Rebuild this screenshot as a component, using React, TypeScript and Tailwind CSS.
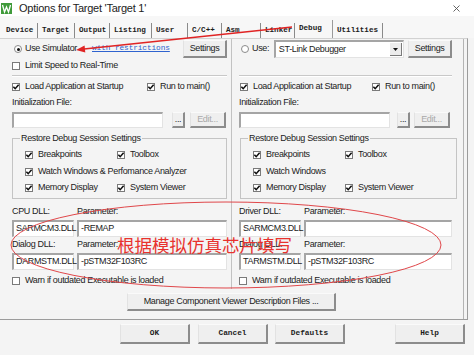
import React from 'react';

const Check = ({ on = true }: { on?: boolean }) => (
  <span className="inline-flex w-[8px] h-[8px] shrink-0 items-center justify-center bg-white border border-[#7a7a7a]">
    {on && (
      <svg width="6" height="6" viewBox="0 0 6 6">
        <path d="M0.4 2.7 L2.2 4.7 L5.6 0.7" fill="none" stroke="#111" strokeWidth="1.5" />
      </svg>
    )}
  </span>
);

const Radio = ({ on = false }: { on?: boolean }) => (
  <span className="inline-flex w-[8px] h-[8px] shrink-0 items-center justify-center rounded-full bg-white border border-[#8a8a8a]">
    {on && <span className="w-[3px] h-[3px] rounded-full bg-[#111]" />}
  </span>
);

const CheckRow = ({ label, on = true, className = '' }: { label: string; on?: boolean; className?: string }) => (
  <div className={`flex items-center gap-[5px] h-[12px] ${className}`}>
    <Check on={on} />
    <span>{label}</span>
  </div>
);

const Btn = ({ children, className = '' }: { children: React.ReactNode; className?: string }) => (
  <div
    className={`flex items-center justify-center bg-[#efefef] border-t border-l border-r-2 border-b-2 border-t-[#fafafa] border-l-[#e2e2e2] border-r-[#8c8c8c] border-b-[#8c8c8c] ${className}`}
  >
    {children}
  </div>
);

const Field = ({ value = '', className = '' }: { value?: string; className?: string }) => (
  <div
    className={`flex items-center bg-white pl-[2px] border-t-2 border-l-2 border-r border-b border-t-[#a5a5a5] border-l-[#a5a5a5] border-r-[#e3e3e3] border-b-[#e3e3e3] ${className}`}
  >
    {value}
  </div>
);

const Sep = () => <div className="mt-[3px] h-[2px] border-t border-b border-t-[#c8c8c8] border-b-white" />;

const Group = ({ wide, className = '' }: { wide: boolean; className?: string }) => (
  <fieldset className={`h-[66px] border border-[#c4c4c4] ${className}`}>
    <legend className="ml-[7px] px-[1px] leading-[11px]">Restore Debug Session Settings</legend>
    <div className="mt-[5px] pl-[12px] flex flex-col gap-[4.5px]">
      <div className="flex">
        <CheckRow label="Breakpoints" className="w-[92px]" />
        <CheckRow label="Toolbox" />
      </div>
      <CheckRow label={wide ? 'Watch Windows & Perfomance Analyzer' : 'Watch Windows'} />
      <div className="flex">
        <CheckRow label="Memory Display" className="w-[92px]" />
        <CheckRow label="System Viewer" />
      </div>
    </div>
  </fieldset>
);

const tabs = [
  { name: 'Device', w: 'w-[36px]' },
  { name: 'Target', w: 'w-[37px]' },
  { name: 'Output', w: 'w-[35px]' },
  { name: 'Listing', w: 'w-[42px]' },
  { name: 'User', w: 'w-[36px]' },
  { name: 'C/C++', w: 'w-[34px]' },
  { name: 'Asm', w: 'w-[39px]' },
  { name: 'Linker', w: 'w-[34px]' },
  { name: 'Debug', w: 'w-[38px]' },
  { name: 'Utilities', w: 'w-[50px]' },
];

export default function App() {
  return (
    <div className="relative w-[474px] h-[355px] overflow-hidden bg-[#f4f4f4] text-[#1c1c1c] font-['Liberation_Sans',Arial,sans-serif] text-[9px] tracking-[-0.35px]">
      {/* title bar */}
      <div className="h-[16px] bg-white flex items-center pl-[1px] pr-[14px]">
        <svg width="11" height="11" viewBox="0 0 11 11">
          <rect width="11" height="11" fill="#3f9a3a" />
          <path d="M1.5 2 L3.5 9 L5.5 4 L7.5 9 L9.5 2" fill="none" stroke="#fff" strokeWidth="1.3" />
        </svg>
        <span className="ml-[7px] text-[11px] tracking-[-0.25px] text-[#222]">Options for Target 'Target 1'</span>
        <svg className="ml-auto" width="7" height="7" viewBox="0 0 7 7">
          <path d="M0.5 0.5 L6.5 6.5 M6.5 0.5 L0.5 6.5" stroke="#555" strokeWidth="0.9" />
        </svg>
      </div>

      {/* tabs */}
      <div className="h-[22px] flex items-end pl-[2px] bg-[#f7f7f7] font-['Liberation_Mono',monospace] font-bold text-[7.6px] tracking-[0px]">
        {tabs.map((t) => (
          <div
            key={t.name}
            className={`${t.w} flex items-center pl-[4px] border-r border-r-[#8a8a8a] ${
              t.name === 'Debug' ? 'h-[18px] border-r-[#9a9a9a]' : 'h-[15px]'
            }`}
          >
            {t.name}
          </div>
        ))}
      </div>

      {/* tab panel */}
      <div className="w-[468px] h-[282px] border-t border-r border-b border-t-[#d2d2d2] border-r-[#9c9c9c] border-b-[#9c9c9c]">
        <div className="w-[464px] h-full border-r border-r-[#b4b4b4] flex flex-col">
          <div className="flex h-[250px]">
            {/* left column */}
            <div className="w-[232px] border-r border-r-[#c2c2c2] pl-[12px] pr-[4px] flex flex-col">
              <div className="mt-[1px] h-[18px] flex items-center">
                <div className="flex items-center gap-[3px] pl-[2px] w-[80px]">
                  <Radio on />
                  <span>Use Simulator</span>
                </div>
                <span className="font-['Liberation_Mono',monospace] text-[7.8px] tracking-[-0.1px] text-[#2f63cf] underline">
                  with restrictions
                </span>
                <Btn className="ml-auto w-[44px] h-[18px]">Settings</Btn>
              </div>
              <CheckRow label="Limit Speed to Real-Time" on={false} className="mt-[2px]" />
              <Sep />
              <div className="mt-[4px] flex">
                <CheckRow label="Load Application at Startup" className="w-[135px]" />
                <CheckRow label="Run to main()" />
              </div>
              <div className="mt-[4px] h-[12px] flex items-center">Initialization File:</div>
              <div className="mt-[3px] flex h-[16px]">
                <Field className="w-[151px]" />
                <Btn className="ml-[9px] w-[13px]">...</Btn>
                <Btn className="ml-[5px] w-[36px] text-[#a9a9a9]">Edit...</Btn>
              </div>
              <Group wide className="mt-[5px] w-[215px]" />
              <div className="mt-[7px] h-[12px] flex items-center">
                <span className="w-[65px]">CPU DLL:</span>
                <span>Parameter:</span>
              </div>
              <div className="mt-[2px] flex h-[17px]">
                <Field value="SARMCM3.DLL" className="w-[62px]" />
                <Field value="-REMAP" className="ml-[3px] w-[150px]" />
              </div>
              <div className="mt-[2px] h-[12px] flex items-center">
                <span className="w-[65px]">Dialog DLL:</span>
                <span>Parameter:</span>
              </div>
              <div className="mt-[2px] flex h-[17px]">
                <Field value="DARMSTM.DLL" className="w-[62px]" />
                <Field value="-pSTM32F103RC" className="ml-[3px] w-[150px]" />
              </div>
              <CheckRow label="Warn if outdated Executable is loaded" on={false} className="mt-[5px]" />
            </div>

            {/* right column */}
            <div className="w-[231px] pl-[7px] pr-[11px] flex flex-col">
              <div className="mt-[1px] h-[18px] flex items-center">
                <div className="flex items-center gap-[3px] pl-[2px] w-[35px]">
                  <Radio />
                  <span>Use:</span>
                </div>
                <div className="w-[131px] h-[18px] flex items-center bg-white pl-[3px] border-t-2 border-l-2 border-r border-b border-t-[#a5a5a5] border-l-[#a5a5a5] border-r-[#e3e3e3] border-b-[#e3e3e3]">
                  <span>ST-Link Debugger</span>
                  <div className="ml-auto mr-[1px] w-[12px] h-[13px] flex items-center justify-center bg-[#ececec] border-r border-b border-r-[#7a7a7a] border-b-[#7a7a7a]">
                    <svg width="5" height="3" viewBox="0 0 5 3">
                      <path d="M0 0 L5 0 L2.5 3 Z" fill="#111" />
                    </svg>
                  </div>
                </div>
                <Btn className="ml-[4px] w-[44px] h-[18px]">Settings</Btn>
              </div>
              <div className="mt-[2px] h-[12px]" />
              <Sep />
              <div className="mt-[4px] flex pl-[1px]">
                <CheckRow label="Load Application at Startup" className="w-[132px]" />
                <CheckRow label="Run to main()" />
              </div>
              <div className="mt-[4px] h-[12px] flex items-center">Initialization File:</div>
              <div className="mt-[3px] flex h-[16px]">
                <Field className="w-[151px]" />
                <Btn className="ml-[7px] w-[13px]">...</Btn>
                <Btn className="ml-[4px] w-[36px] text-[#a9a9a9]">Edit...</Btn>
              </div>
              <Group wide={false} className="mt-[5px] ml-[1px] w-[217px]" />
              <div className="mt-[7px] h-[12px] flex items-center">
                <span className="w-[65px]">Driver DLL:</span>
                <span>Parameter:</span>
              </div>
              <div className="mt-[2px] flex h-[17px]">
                <Field value="SARMCM3.DLL" className="w-[62px]" />
                <Field value="" className="ml-[3px] w-[148px]" />
              </div>
              <div className="mt-[2px] h-[12px] flex items-center">
                <span className="w-[65px]">Dialog DLL:</span>
                <span>Parameter:</span>
              </div>
              <div className="mt-[2px] flex h-[17px]">
                <Field value="TARMSTM.DLL" className="w-[62px]" />
                <Field value="-pSTM32F103RC" className="ml-[3px] w-[148px]" />
              </div>
              <CheckRow label="Warn if outdated Executable is loaded" on={false} className="mt-[5px]" />
            </div>
          </div>

          <div className="mt-[4px] flex justify-center">
            <Btn className="w-[209px] h-[18px]">Manage Component Viewer Description Files ...</Btn>
          </div>
        </div>
      </div>

      {/* dialog buttons */}
      <div className="mt-[4px] flex pl-[120px] font-['Liberation_Mono',monospace] font-bold text-[7.8px] tracking-[0px]">
        <Btn className="w-[70px] h-[20px]">OK</Btn>
        <Btn className="ml-[8px] w-[70px] h-[20px]">Cancel</Btn>
        <Btn className="ml-[7px] w-[70px] h-[20px]">Defaults</Btn>
        <Btn className="ml-[50px] w-[70px] h-[20px]">Help</Btn>
      </div>

      {/* red annotations */}
      <svg className="absolute inset-0 pointer-events-none" width="474" height="355" viewBox="0 0 474 355">
        <ellipse cx="226" cy="245" rx="215" ry="43" fill="none" stroke="#e0474a" strokeWidth="1" />
        <line x1="292" y1="27" x2="84" y2="49" stroke="#e02424" strokeWidth="1.4" />
        <polygon points="76,50 84.6,45.4 85.3,52.6" fill="#e02424" />
      </svg>
      <div className="absolute left-[117px] top-[236px] text-[17.5px] leading-none tracking-[0px] text-[#e8322e] font-['Noto_Sans_CJK_SC',sans-serif] pointer-events-none">
        根据模拟仿真芯片填写
      </div>
    </div>
  );
}
